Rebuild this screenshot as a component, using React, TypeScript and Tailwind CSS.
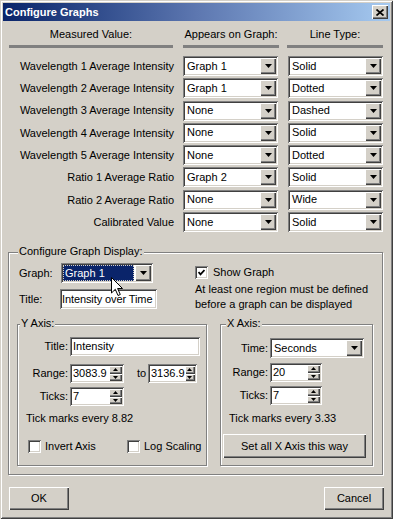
import type { ReactNode } from 'react';

// Win2000-style "Configure Graphs" dialog

const sunken =
  'bg-white shadow-[inset_1px_1px_0_#808080,inset_-1px_-1px_0_#ffffff,inset_2px_2px_0_#404040,inset_-2px_-2px_0_#d4d0c8]';
const raised =
  'bg-[#d4d0c8] shadow-[inset_1px_1px_0_#ffffff,inset_-1px_-1px_0_#404040,inset_-2px_-2px_0_#808080]';

function DownArrow() {
  return (
    <svg width="7" height="4" viewBox="0 0 7 4">
      <polygon points="0,0 7,0 3.5,4" fill="#000" />
    </svg>
  );
}

function Combo({ value, className, selected }: { value: string; className: string; selected?: boolean }) {
  return (
    <div className={`${sunken} ${className} flex items-stretch p-[2px]`}>
      <div
        className={`flex-1 flex items-center pl-[2px] leading-none ${
          selected ? 'bg-[#0a246a] text-white outline-1 outline-dotted outline-[#d4d0c8] outline-offset-[-1px] mr-[1px]' : ''
        }`}
      >
        {value}
      </div>
      <div className={`${raised} w-[16px] flex items-center justify-center`}>
        <DownArrow />
      </div>
    </div>
  );
}

function Spin({ value, className }: { value: string; className: string }) {
  return (
    <div className={`${sunken} ${className} flex p-[2px]`}>
      <div className="flex-1 flex items-center pl-[1px] leading-none">{value}</div>
      <div className="flex flex-col w-[13px]">
        <div className={`${raised} flex-1 flex items-center justify-center`}>
          <svg width="5" height="3" viewBox="0 0 5 3">
            <polygon points="0,3 5,3 2.5,0" fill="#000" />
          </svg>
        </div>
        <div className={`${raised} flex-1 flex items-center justify-center`}>
          <svg width="5" height="3" viewBox="0 0 5 3">
            <polygon points="0,0 5,0 2.5,3" fill="#000" />
          </svg>
        </div>
      </div>
    </div>
  );
}

function Check({ checked }: { checked?: boolean }) {
  return (
    <div className={`${sunken} w-[13px] h-[13px] flex items-center justify-center`}>
      {checked && (
        <svg width="7" height="7" viewBox="0 0 7 7">
          <polyline points="0.5,3 2.5,5.3 6.5,1" fill="none" stroke="#000" strokeWidth="1.8" />
        </svg>
      )}
    </div>
  );
}

function Group({ label, legendPos, className, children }: { label: string; legendPos: string; className: string; children: ReactNode }) {
  return (
    <div className={`relative border border-[#808080] shadow-[inset_1px_1px_0_#ffffff,1px_1px_0_#ffffff] ${className}`}>
      <span className={`absolute -top-[8px] ${legendPos} bg-[#d4d0c8] px-[1px] leading-[13px]`}>{label}</span>
      {children}
    </div>
  );
}

const rows = [
  ['Wavelength 1 Average Intensity', 'Graph 1', 'Solid'],
  ['Wavelength 2 Average Intensity', 'Graph 1', 'Dotted'],
  ['Wavelength 3 Average Intensity', 'None', 'Dashed'],
  ['Wavelength 4 Average Intensity', 'None', 'Solid'],
  ['Wavelength 5 Average Intensity', 'None', 'Dotted'],
  ['Ratio 1 Average Ratio', 'Graph 2', 'Solid'],
  ['Ratio 2 Average Ratio', 'None', 'Wide'],
  ['Calibrated Value', 'None', 'Solid'],
];

export default function App() {
  return (
    <div className="relative w-[393px] h-[519px] overflow-hidden bg-[#d4d0c8] p-[3px] flex flex-col text-[11px] text-black font-['Liberation_Sans',Arial,sans-serif] shadow-[inset_1px_1px_0_#d4d0c8,inset_-1px_-1px_0_#404040,inset_2px_2px_0_#ffffff,inset_-2px_-2px_0_#808080]">
      {/* Title bar */}
      <div className="h-[18px] flex items-center justify-between pl-[2px] pr-[2px] bg-linear-to-r from-[#0a246a] via-[#5d77b0] to-[#a6caf0]">
        <span className="text-white font-bold leading-none">Configure Graphs</span>
        <div className={`${raised} w-[16px] h-[14px] flex items-center justify-center`}>
          <svg width="8" height="7" viewBox="0 0 8 7">
            <path d="M0.5 0.5 L7.5 6.5 M7.5 0.5 L0.5 6.5" stroke="#000" strokeWidth="1.7" />
          </svg>
        </div>
      </div>

      {/* Column headers */}
      <div className="mt-[7px] ml-[6px] flex">
        <div className="w-[164px] flex flex-col items-center">
          <span className="h-[13px] leading-[13px]">Measured Value:</span>
          <div className="mt-[4px] h-[3px] w-full bg-[#808080]" />
        </div>
        <div className="ml-[10px] w-[96px] flex flex-col items-center">
          <span className="h-[13px] leading-[13px]">Appears on Graph:</span>
          <div className="mt-[4px] h-[3px] w-full bg-[#808080]" />
        </div>
        <div className="ml-[8px] w-[96px] flex flex-col items-center">
          <span className="h-[13px] leading-[13px]">Line Type:</span>
          <div className="mt-[4px] h-[3px] w-full bg-[#808080]" />
        </div>
      </div>

      {/* Measured value rows */}
      <div className="mt-[8px] ml-[6px] flex flex-col gap-[2.3px]">
        {rows.map(([label, graph, line]) => (
          <div key={label} className="flex items-center h-[20px]">
            <span className="w-[165px] text-right">{label}</span>
            <Combo value={graph} className="ml-[9px] w-[95px] h-[20px]" />
            <Combo value={line} className="ml-[10px] w-[95px] h-[20px]" />
          </div>
        ))}
      </div>

      {/* Configure Graph Display */}
      <Group label="Configure Graph Display:" legendPos="left-[9px]" className="mt-[20px] ml-[5px] w-[375px] h-[223px]">
        <div className="h-[71px] pt-[10px] pl-[10px] flex">
          <div className="flex flex-col w-[138px]">
            <div className="flex items-center h-[20px]">
              <span className="w-[42px]">Graph:</span>
              <Combo value="Graph 1" className="w-[92px] h-[20px]" selected />
            </div>
            <div className="mt-[6px] flex items-center h-[20px]">
              <span className="w-[41px]">Title:</span>
              <div className={`${sunken} w-[97px] h-[20px] flex items-center pl-[2px] leading-none whitespace-nowrap overflow-hidden tracking-[-0.1px]`}>
                Intensity over Time
              </div>
            </div>
          </div>
          <div className="ml-[38px] pt-[3px] flex flex-col">
            <div className="flex items-center gap-[5px] h-[13px]">
              <Check checked />
              <span>Show Graph</span>
            </div>
            <div className="mt-[3px] leading-[15px]">
              <div>At least one region must be defined</div>
              <div>before a graph can be displayed</div>
            </div>
          </div>
        </div>

        <div className="flex pl-[8px]">
          {/* Y Axis */}
          <Group label="Y Axis:" legendPos="left-[2px]" className="w-[190px] h-[142px]">
            <div className="mt-[12px] flex items-center h-[19px]">
              <span className="w-[52px] text-right pr-[2px]">Title:</span>
              <div className={`${sunken} w-[130px] h-[19px] flex items-center pl-[3px] leading-none`}>Intensity</div>
            </div>
            <div className="mt-[8px] flex items-center h-[19px]">
              <span className="w-[52px] text-right pr-[2px]">Range:</span>
              <Spin value="3083.9" className="w-[54px] h-[19px]" />
              <span className="ml-[13px] w-[11px]">to</span>
              <Spin value="3136.9" className="w-[49px] h-[19px]" />
            </div>
            <div className="mt-[4px] flex items-center h-[19px]">
              <span className="w-[52px] text-right pr-[2px]">Ticks:</span>
              <Spin value="7" className="w-[54px] h-[19px]" />
            </div>
            <div className="mt-[6px] pl-[8px] leading-[13px]">Tick marks every 8.82</div>
            <div className="mt-[15px] pl-[10px] flex items-center h-[13px]">
              <div className="w-[99px] flex items-center gap-[4px]">
                <Check />
                <span>Invert Axis</span>
              </div>
              <div className="flex items-center gap-[4px]">
                <Check />
                <span>Log Scaling</span>
              </div>
            </div>
          </Group>

          {/* X Axis */}
          <Group label="X Axis:" legendPos="left-[5px]" className="ml-[13px] w-[153px] h-[142px]">
            <div className="mt-[13px] flex items-center h-[20px]">
              <span className="w-[49px] text-right pr-[2px]">Time:</span>
              <Combo value="Seconds" className="w-[94px] h-[20px]" />
            </div>
            <div className="mt-[5px] flex items-center h-[19px]">
              <span className="w-[49px] text-right pr-[2px]">Range:</span>
              <Spin value="20" className="w-[52px] h-[19px]" />
            </div>
            <div className="mt-[4px] flex items-center h-[19px]">
              <span className="w-[49px] text-right pr-[2px]">Ticks:</span>
              <Spin value="7" className="w-[52px] h-[19px]" />
            </div>
            <div className="mt-[7px] pl-[8px] leading-[13px]">Tick marks every 3.33</div>
            <div className={`${raised} mt-[9px] ml-[2px] w-[143px] h-[24px] flex items-center justify-center`}>
              Set all X Axis this way
            </div>
          </Group>
        </div>
      </Group>

      {/* Dialog buttons */}
      <div className="mt-[12px] px-[6px] flex justify-between">
        <div className={`${raised} w-[60px] h-[23px] flex items-center justify-center`}>OK</div>
        <div className={`${raised} w-[60px] h-[23px] flex items-center justify-center`}>Cancel</div>
      </div>

      {/* Mouse pointer over the Graph combo */}
      <svg className="absolute left-[111px] top-[277px]" width="12" height="19" viewBox="0 0 12 19">
        <path d="M0.5 0.5 L0.5 16 L4.3 12.3 L7 18.5 L9.3 17.5 L6.6 11.5 L11.5 11.5 Z" fill="#fff" stroke="#000" strokeWidth="1" />
      </svg>
    </div>
  );
}
